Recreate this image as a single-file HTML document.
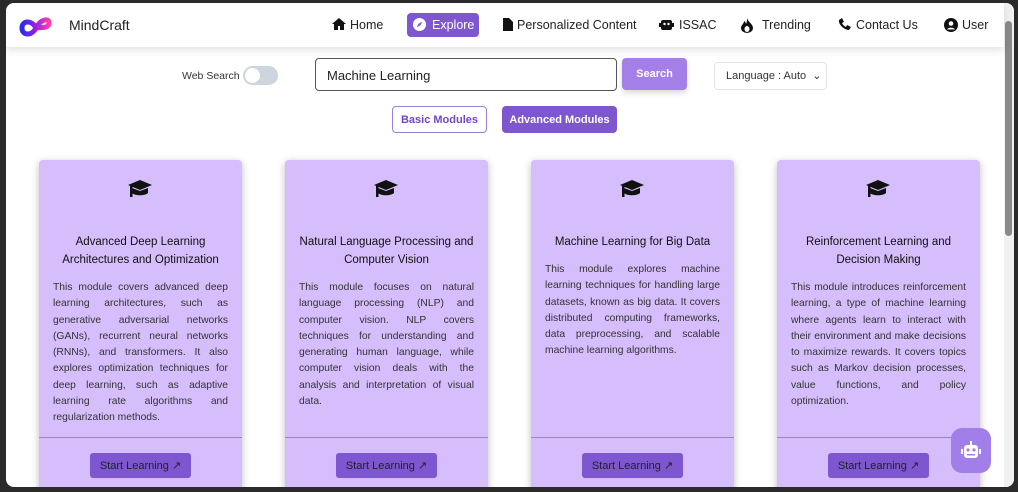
<!DOCTYPE html>
<html><head><meta charset="utf-8"><style>
*{box-sizing:border-box;margin:0;padding:0}
html,body{width:1018px;height:492px;overflow:hidden;background:#2a2a2a;font-family:"Liberation Sans",sans-serif}
.page{position:absolute;left:6px;top:3px;width:1008px;height:484px;background:#fff;border-radius:8px;overflow:hidden}
.nav{position:absolute;left:0;top:0;width:998px;height:44px;background:#fff;box-shadow:0 3px 8px rgba(0,0,0,.12);z-index:2}
.logo{position:absolute;left:12px;top:12px}
.brand{position:absolute;left:63px;top:14px;font-size:14px;color:#222}
.ni{position:absolute;top:10px;height:24px;font-size:12.5px;color:#222}
.ni svg{position:absolute;top:5px}
.ni span{position:absolute;top:5px;white-space:nowrap}
.act{position:absolute;left:401px;top:10px;width:72px;height:24px;background:#7e57d0;border-radius:4px}
.sb{position:absolute;left:998px;top:0;width:10px;height:484px;background:#f1f1f1}
.sb div{position:absolute;left:1px;top:18px;width:7px;height:215px;background:#8a8a8a;border-radius:4px}
.ws{position:absolute;left:176px;top:67px;font-size:10.5px;color:#333}
.tg{position:absolute;left:237px;top:63px;width:35px;height:19px;border-radius:10px;background:#cdd5df}
.tg:after{content:"";position:absolute;left:2px;top:2px;width:15px;height:15px;border-radius:50%;background:#fff}
.inp{position:absolute;left:309px;top:55px;width:302px;height:33px;border:1px solid #555;border-radius:4px;font-size:13px;color:#222;padding:9px 11px}
.btn{position:absolute;left:616px;top:55px;width:65px;height:32px;background:#a47fe8;border-radius:4px;color:#fff;font-size:11px;font-weight:bold;text-align:center;line-height:32px;box-shadow:0 3px 6px rgba(0,0,0,.15)}
.lang{position:absolute;left:708px;top:59px;width:113px;height:28px;border:1px solid #e4e4e4;border-radius:4px;font-size:11px;color:#333;line-height:26px;padding-left:11px}
.bm{position:absolute;left:386px;top:103px;width:95px;height:27px;border:1px solid #9b7fd9;border-radius:4px;color:#7046c8;font-size:11px;font-weight:bold;text-align:center;line-height:27px}
.am{position:absolute;left:496px;top:103px;width:115px;height:27px;background:#7e57d0;border-radius:4px;color:#fff;font-size:11px;font-weight:bold;text-align:center;line-height:29px}
.card{position:absolute;top:157px;width:203px;height:340px;background:#d6bdfb;border-radius:4px;box-shadow:0 2px 8px rgba(0,0,0,.25)}
.cap{position:absolute;left:88px;top:18px}
.ct{position:absolute;left:8px;right:8px;top:73px;text-align:center;font-size:11.5px;line-height:18px;color:#111}
.cd{position:absolute;left:14px;right:14px;font-size:10.3px;line-height:16.3px;color:#333;text-align:justify;text-align-last:left}
.hr{position:absolute;left:0;right:0;top:277px;height:1px;background:#9a86b8}
.sl{position:absolute;left:51px;top:293px;width:101px;height:25px;background:#7e57d0;border-radius:3px;color:#222;font-size:11px;text-align:center;line-height:27px}
.bot{position:absolute;left:945px;top:425px;width:40px;height:45px;background:#a17ee8;border-radius:11px}
</style></head><body>
<div class="page">
<div class="nav">
<svg class="logo" width="36" height="26" viewBox="0 0 36 26"><defs><linearGradient id="g" x1="0" x2="1"><stop offset="0" stop-color="#2a2ee8"/><stop offset=".5" stop-color="#9b1fe0"/><stop offset="1" stop-color="#ff3ea8"/></linearGradient></defs><path d="M18 13 C14 5 4 5 4 13 C4 21 14 21 18 13 C22 5 31 2 31 8 C31 14 22 12 18 13" fill="none" stroke="url(#g)" stroke-width="5"/></svg>
<div class="brand">MindCraft</div>
<div class="act"></div>
<div class="ni" style="left:326px"><svg width="14" height="12" viewBox="0 0 14 12"><path d="M7 0L0 6h2v6h4V8h2v4h4V6h2z" fill="#111"/></svg><span style="left:18px">Home</span></div>
<div class="ni" style="left:407px;color:#fff"><svg width="13" height="13" viewBox="0 0 14 14"><circle cx="7" cy="7" r="7" fill="#fff"/><path d="M10 4L8 8 4 10 6 6z" fill="#7e57d0"/></svg><span style="left:19px">Explore</span></div>
<div class="ni" style="left:497px"><svg width="10" height="13" viewBox="0 0 10 13"><path d="M0 0h6l4 4v9H0z" fill="#111"/></svg><span style="left:14px">Personalized Content</span></div>
<div class="ni" style="left:653px"><svg width="15" height="12" viewBox="0 0 15 12"><rect x="2" y="2" width="11" height="10" rx="2" fill="#111"/><rect x="0" y="5" width="2" height="4" fill="#111"/><rect x="13" y="5" width="2" height="4" fill="#111"/><circle cx="5.5" cy="6" r="1.2" fill="#fff"/><circle cx="9.5" cy="6" r="1.2" fill="#fff"/></svg><span style="left:20px">ISSAC</span></div>
<div class="ni" style="left:735px"><svg width="12" height="15" viewBox="0 0 12 15"><path d="M6 0C7 4 12 6 12 10A6 5 0 0 1 0 10C0 7 3 6 3 3 5 4 5 6 5 6 6 4 6 2 6 0z" fill="#111"/><ellipse cx="6" cy="11" rx="2.5" ry="3" fill="#fff"/></svg><span style="left:21px">Trending</span></div>
<div class="ni" style="left:832px"><svg width="13" height="13" viewBox="0 0 13 13"><path d="M1 2L4 0l2 4-2 1c1 2 2 3 4 4l1-2 4 2-2 3C6 12 0 6 1 2z" fill="#111"/></svg><span style="left:18px">Contact Us</span></div>
<div class="ni" style="left:938px"><svg width="14" height="14" viewBox="0 0 14 14"><circle cx="7" cy="7" r="7" fill="#111"/><circle cx="7" cy="5.5" r="2.3" fill="#fff"/><path d="M3 11.5a4.5 3.5 0 0 1 8 0" fill="#fff"/></svg><span style="left:18px">User</span></div>
</div>
<div class="sb"><div></div></div>
<div class="ws">Web Search</div><div class="tg"></div>
<div class="inp">Machine Learning</div>
<div class="btn">Search</div>
<div class="lang">Language : Auto &nbsp;&#8964;</div>
<div class="bm">Basic Modules</div><div class="am">Advanced Modules</div>

<div class="card" style="left:33px">
<svg class="cap" width="26" height="26" viewBox="0 0 26 26"><path d="M13 2L1 7l12 5 12-5z M5 10v5c3 3 13 3 16 0v-5l-8 3z" fill="#111"/><rect x="3" y="8" width="2.5" height="11" fill="#111"/></svg>
<div class="ct">Advanced Deep Learning<br>Architectures and Optimization</div>
<div class="cd" style="top:120px">This module covers advanced deep learning architectures, such as generative adversarial networks (GANs), recurrent neural networks (RNNs), and transformers. It also explores optimization techniques for deep learning, such as adaptive learning rate algorithms and regularization methods.</div>
<div class="hr"></div><div class="sl">Start Learning ↗</div></div>

<div class="card" style="left:279px">
<svg class="cap" width="26" height="26" viewBox="0 0 26 26"><path d="M13 2L1 7l12 5 12-5z M5 10v5c3 3 13 3 16 0v-5l-8 3z" fill="#111"/><rect x="3" y="8" width="2.5" height="11" fill="#111"/></svg>
<div class="ct">Natural Language Processing and<br>Computer Vision</div>
<div class="cd" style="top:120px">This module focuses on natural language processing (NLP) and computer vision. NLP covers techniques for understanding and generating human language, while computer vision deals with the analysis and interpretation of visual data.</div>
<div class="hr"></div><div class="sl">Start Learning ↗</div></div>

<div class="card" style="left:525px">
<svg class="cap" width="26" height="26" viewBox="0 0 26 26"><path d="M13 2L1 7l12 5 12-5z M5 10v5c3 3 13 3 16 0v-5l-8 3z" fill="#111"/><rect x="3" y="8" width="2.5" height="11" fill="#111"/></svg>
<div class="ct">Machine Learning for Big Data</div>
<div class="cd" style="top:102px">This module explores machine learning techniques for handling large datasets, known as big data. It covers distributed computing frameworks, data preprocessing, and scalable machine learning algorithms.</div>
<div class="hr"></div><div class="sl">Start Learning ↗</div></div>

<div class="card" style="left:771px">
<svg class="cap" width="26" height="26" viewBox="0 0 26 26"><path d="M13 2L1 7l12 5 12-5z M5 10v5c3 3 13 3 16 0v-5l-8 3z" fill="#111"/><rect x="3" y="8" width="2.5" height="11" fill="#111"/></svg>
<div class="ct">Reinforcement Learning and<br>Decision Making</div>
<div class="cd" style="top:120px">This module introduces reinforcement learning, a type of machine learning where agents learn to interact with their environment and make decisions to maximize rewards. It covers topics such as Markov decision processes, value functions, and policy optimization.</div>
<div class="hr"></div><div class="sl">Start Learning ↗</div></div>

<div class="bot"><svg style="position:absolute;left:9px;top:13px" width="22" height="18" viewBox="0 0 22 18"><rect x="10" y="0" width="2" height="4" fill="#fff"/><rect x="4" y="4" width="14" height="13" rx="3" fill="#fff"/><rect x="1" y="8" width="2" height="5" fill="#fff"/><rect x="19" y="8" width="2" height="5" fill="#fff"/><circle cx="8" cy="9" r="1.6" fill="#a17ee8"/><circle cx="14" cy="9" r="1.6" fill="#a17ee8"/><rect x="7" y="13" width="8" height="1.5" fill="#a17ee8"/></svg></div>
</div>
</body></html>
